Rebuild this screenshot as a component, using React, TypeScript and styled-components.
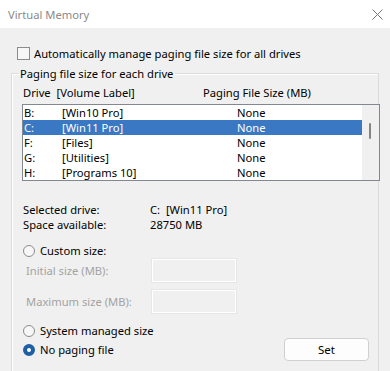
import React from "react";
import styled, { createGlobalStyle } from "styled-components";

const GlobalStyle = createGlobalStyle`
  html, body {
    margin: 0;
    padding: 0;
    background: #f0f0f0;
  }
  body {
    font-family: "Noto Sans", "Liberation Sans", sans-serif;
    font-size: 11.2px;
    color: #000;
  }
`;

const Window = styled.div`
  width: 390px;
  height: 371px;
  overflow: hidden;
  background: #f0f0f0;
  display: flex;
  flex-direction: column;
`;

const TitleBar = styled.div`
  flex: 0 0 28px;
  background: #fff;
  display: flex;
  align-items: center;
  justify-content: space-between;
  padding: 0 7px 0 8px;
  color: #8a8a8a;
  font-size: 11.2px;
`;

const Body = styled.div`
  padding: 0 11px;
  display: flex;
  flex-direction: column;
`;

const CheckRow = styled.label`
  display: flex;
  align-items: center;
  gap: 4px;
  margin: 19px 0 0 6px;
  height: 13px;
  line-height: 13px;
`;

const Box = styled.span`
  width: 11px;
  height: 11px;
  border: 1px solid #8c8c8c;
  background: #f7f7f7;
`;

const Group = styled.fieldset`
  margin: 6px 0 0 0;
  padding: 0 0 0 10px;
  border: 1px solid #dcdcdc;
  box-shadow: inset 1px 1px 0 #fff;
  height: 320px;
  min-width: 0;
`;

const Legend = styled.legend`
  padding: 0 2px;
  margin-left: -4px;
  line-height: 15px;
`;

const Header = styled.div`
  display: grid;
  grid-template-columns: 180px 1fr;
  line-height: 15px;
  margin-top: 4px;
  padding-left: 1px;
`;

const ListBox = styled.div`
  margin: 4px -2px 0 0;
  height: 75px;
  border: 1px solid #828790;
  background: #fff;
  display: flex;
`;

const Rows = styled.div`
  flex: 1;
`;

const Row = styled.div<{ $selected?: boolean }>`
  display: grid;
  grid-template-columns: 38px 175px 1fr;
  height: 15px;
  line-height: 15px;
  padding-left: 1px;
  background: ${(p) => (p.$selected ? "#3a78c3" : "transparent")};
  color: ${(p) => (p.$selected ? "#fff" : "#000")};
`;

const ScrollTrack = styled.div`
  flex: 0 0 17px;
  background: #f0f0f0;
  position: relative;
`;

const Thumb = styled.div`
  position: absolute;
  left: 7px;
  top: 18px;
  width: 2px;
  height: 16px;
  border-radius: 1px;
  background: #858585;
`;

const Info = styled.div`
  display: grid;
  grid-template-columns: 127px 1fr;
  line-height: 15px;
  margin-top: 21px;
  padding-left: 1px;
`;

const RadioRow = styled.div<{ $top: number }>`
  display: flex;
  align-items: center;
  gap: 5px;
  height: 15px;
  margin-top: ${(p) => p.$top}px;
  padding-left: 1px;
`;

const Radio = styled.span<{ $checked?: boolean }>`
  box-sizing: border-box;
  width: 12px;
  height: 12px;
  border-radius: 50%;
  border: ${(p) => (p.$checked ? "4px solid #1f5fa6" : "1px solid #8c8c8c")};
  background: ${(p) => (p.$checked ? "#fff" : "#f7f7f7")};
`;

const SizeRow = styled.div<{ $top: number }>`
  display: grid;
  grid-template-columns: 125px 86px;
  align-items: center;
  margin-top: ${(p) => p.$top}px;
  padding-left: 4px;
  color: #a3a3a3;
`;

const Field = styled.div`
  box-sizing: border-box;
  height: 25px;
  border: 1px solid #e6e6e6;
  box-shadow: inset 0 0 0 1px #fff;
  background: #f0f0f0;
`;

const Footer = styled.div`
  display: flex;
  align-items: center;
  justify-content: space-between;
  margin-top: 0;
  padding-right: 9px;
`;

const Button = styled.button`
  width: 85px;
  height: 23px;
  border: 1px solid #d0d0d0;
  border-radius: 4px;
  background: #fdfdfd;
  font: inherit;
  font-size: 11.5px;
  color: #000;
  padding: 0;
`;

const drives = [
  ["B:", "[Win10 Pro]"],
  ["C:", "[Win11 Pro]"],
  ["F:", "[Files]"],
  ["G:", "[Utilities]"],
  ["H:", "[Programs 10]"],
];

const App = (): JSX.Element => (
  <Window>
    <GlobalStyle />
    <TitleBar>
      <span>Virtual Memory</span>
      <svg width="11" height="11" viewBox="0 0 11 11">
        <path d="M0.5 0.5 L10.5 10.5 M10.5 0.5 L0.5 10.5" stroke="#777" strokeWidth="1" />
      </svg>
    </TitleBar>
    <Body>
      <CheckRow>
        <Box />
        Automatically manage paging file size for all drives
      </CheckRow>
      <Group>
        <Legend>Paging file size for each drive</Legend>
        <Header>
          <span>Drive&nbsp; [Volume Label]</span>
          <span>Paging File Size (MB)</span>
        </Header>
        <ListBox>
          <Rows>
            {drives.map(([letter, label]) => (
              <Row key={letter} $selected={letter === "C:"}>
                <span>{letter}</span>
                <span>{label}</span>
                <span>None</span>
              </Row>
            ))}
          </Rows>
          <ScrollTrack>
            <Thumb />
          </ScrollTrack>
        </ListBox>
        <Info>
          <span>Selected drive:</span>
          <span>C:&nbsp; [Win11 Pro]</span>
          <span>Space available:</span>
          <span>28750 MB</span>
        </Info>
        <RadioRow $top={11}>
          <Radio />
          Custom size:
        </RadioRow>
        <SizeRow $top={0}>
          <span>Initial size (MB):</span>
          <Field />
        </SizeRow>
        <SizeRow $top={6}>
          <span>Maximum size (MB):</span>
          <Field />
        </SizeRow>
        <RadioRow $top={9}>
          <Radio />
          System managed size
        </RadioRow>
        <Footer>
          <RadioRow $top={0}>
            <Radio $checked />
            No paging file
          </RadioRow>
          <Button>Set</Button>
        </Footer>
      </Group>
    </Body>
  </Window>
);

export default App;
